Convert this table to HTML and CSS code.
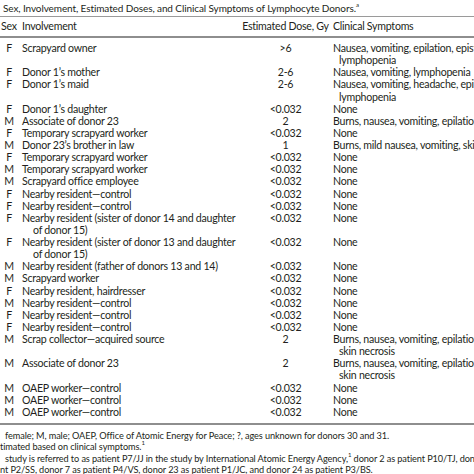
FILE: index.html
```html
<!DOCTYPE html>
<html>
<head>
<meta charset="utf-8">
<link rel="stylesheet" href="styles.css">
</head>
<body>
<div class="page">
  <div class="title">Sex, Involvement, Estimated Doses, and Clinical Symptoms of Lymphocyte Donors.<sup class="sup">a</sup></div>
  <div class="rule thin"></div>
  <div class="row head">
    <div class="sex">Sex</div>
    <div class="inv">Involvement</div>
    <div class="dose">Estimated Dose, Gy</div>
    <div class="sym">Clinical Symptoms</div>
  </div>
  <div class="rule thick"></div>
  <div class="body">
    <div class="row"><div class="sex">F</div><div class="inv">Scrapyard owner</div><div class="dose">&gt;6</div><div class="sym">Nausea, vomiting, epilation, epistaxis,<span class="cont">lymphopenia</span></div></div>
    <div class="row"><div class="sex">F</div><div class="inv">Donor 1’s mother</div><div class="dose">2-6</div><div class="sym">Nausea, vomiting, lymphopenia</div></div>
    <div class="row"><div class="sex">F</div><div class="inv">Donor 1’s maid</div><div class="dose">2-6</div><div class="sym">Nausea, vomiting, headache, epilation,<span class="cont">lymphopenia</span></div></div>
    <div class="row"><div class="sex">F</div><div class="inv">Donor 1’s daughter</div><div class="dose">&lt;0.032</div><div class="sym">None</div></div>
    <div class="row"><div class="sex">M</div><div class="inv">Associate of donor 23</div><div class="dose">2</div><div class="sym">Burns, nausea, vomiting, epilation</div></div>
    <div class="row"><div class="sex">F</div><div class="inv">Temporary scrapyard worker</div><div class="dose">&lt;0.032</div><div class="sym">None</div></div>
    <div class="row"><div class="sex">M</div><div class="inv">Donor 23’s brother in law</div><div class="dose">1</div><div class="sym">Burns, mild nausea, vomiting, skin</div></div>
    <div class="row"><div class="sex">F</div><div class="inv">Temporary scrapyard worker</div><div class="dose">&lt;0.032</div><div class="sym">None</div></div>
    <div class="row"><div class="sex">M</div><div class="inv">Temporary scrapyard worker</div><div class="dose">&lt;0.032</div><div class="sym">None</div></div>
    <div class="row"><div class="sex">M</div><div class="inv">Scrapyard office employee</div><div class="dose">&lt;0.032</div><div class="sym">None</div></div>
    <div class="row"><div class="sex">F</div><div class="inv">Nearby resident—control</div><div class="dose">&lt;0.032</div><div class="sym">None</div></div>
    <div class="row"><div class="sex">F</div><div class="inv">Nearby resident—control</div><div class="dose">&lt;0.032</div><div class="sym">None</div></div>
    <div class="row"><div class="sex">F</div><div class="inv">Nearby resident (sister of donor 14 and daughter<span class="cont">of donor 15)</span></div><div class="dose">&lt;0.032</div><div class="sym">None</div></div>
    <div class="row"><div class="sex">F</div><div class="inv">Nearby resident (sister of donor 13 and daughter<span class="cont">of donor 15)</span></div><div class="dose">&lt;0.032</div><div class="sym">None</div></div>
    <div class="row"><div class="sex">M</div><div class="inv">Nearby resident (father of donors 13 and 14)</div><div class="dose">&lt;0.032</div><div class="sym">None</div></div>
    <div class="row"><div class="sex">M</div><div class="inv">Scrapyard worker</div><div class="dose">&lt;0.032</div><div class="sym">None</div></div>
    <div class="row"><div class="sex">F</div><div class="inv">Nearby resident, hairdresser</div><div class="dose">&lt;0.032</div><div class="sym">None</div></div>
    <div class="row"><div class="sex">M</div><div class="inv">Nearby resident—control</div><div class="dose">&lt;0.032</div><div class="sym">None</div></div>
    <div class="row"><div class="sex">F</div><div class="inv">Nearby resident—control</div><div class="dose">&lt;0.032</div><div class="sym">None</div></div>
    <div class="row"><div class="sex">F</div><div class="inv">Nearby resident—control</div><div class="dose">&lt;0.032</div><div class="sym">None</div></div>
    <div class="row"><div class="sex">M</div><div class="inv">Scrap collector—acquired source</div><div class="dose">2</div><div class="sym">Burns, nausea, vomiting, epilation,<span class="cont">skin necrosis</span></div></div>
    <div class="row"><div class="sex">M</div><div class="inv">Associate of donor 23</div><div class="dose">2</div><div class="sym">Burns, nausea, vomiting, epilation,<span class="cont">skin necrosis</span></div></div>
    <div class="row"><div class="sex">M</div><div class="inv">OAEP worker—control</div><div class="dose">&lt;0.032</div><div class="sym">None</div></div>
    <div class="row"><div class="sex">M</div><div class="inv">OAEP worker—control</div><div class="dose">&lt;0.032</div><div class="sym">None</div></div>
    <div class="row"><div class="sex">M</div><div class="inv">OAEP worker—control</div><div class="dose">&lt;0.032</div><div class="sym">None</div></div>
  </div>
  <div class="rule thick"></div>
  <div class="notes">
    <div class="note n1">female; M, male; OAEP, Office of Atomic Energy for Peace; ?, ages unknown for donors 30 and 31.</div>
    <div class="note">timated based on clinical symptoms.<sup class="sup">1</sup></div>
    <div class="note n1">study is referred to as patient P7/JJ in the study by International Atomic Energy Agency,<sup class="sup">1</sup> donor 2 as patient P10/TJ, donor 3</div>
    <div class="note">nt P2/SS, donor 7 as patient P4/VS, donor 23 as patient P1/JC, and donor 24 as patient P3/BS.</div>
  </div>
</div>
</body>
</html>
```
FILE: styles.css
```css
html, body {
  margin: 0;
  padding: 0;
  background: #ffffff;
  overflow: hidden;
}
body {
  width: 474px;
  height: 474px;
  font-family: "Lato", "Liberation Sans", sans-serif;
  color: #231f20;
}
.page {
  width: 700px;
}
.title {
  font-size: 10px;
  line-height: 14px;
  padding: 1px 0 0 3px;
  height: 15px;
  white-space: nowrap;
  letter-spacing: -0.1px;
}
.sup {
  font-size: 6px;
  vertical-align: 5px;
  line-height: 0;
}
.rule {
  background: #8e8e8e;
}
.rule.thin {
  height: 1px;
  background: #9a9a9a;
}
.rule.thick {
  height: 2px;
}
.row {
  display: grid;
  grid-template-columns: 18px 220px 95px 330px;
  font-size: 10.6px;
  line-height: 12.13px;
  white-space: nowrap;
  letter-spacing: -0.25px;
}
.row.head {
  height: 19px;
  align-items: center;
}
.sex {
  text-align: center;
}
.inv {
  padding-left: 4px;
}
.dose {
  text-align: center;
}
.cont {
  display: block;
}
.inv .cont {
  padding-left: 11px;
}
.sym .cont {
  padding-left: 6px;
}
.body {
  padding: 4px 0 5px;
}
.notes {
  padding-top: 5px;
  font-size: 9.2px;
  line-height: 11.5px;
  white-space: nowrap;
  letter-spacing: -0.1px;
}
.note.n1 {
  padding-left: 5px;
}
```
